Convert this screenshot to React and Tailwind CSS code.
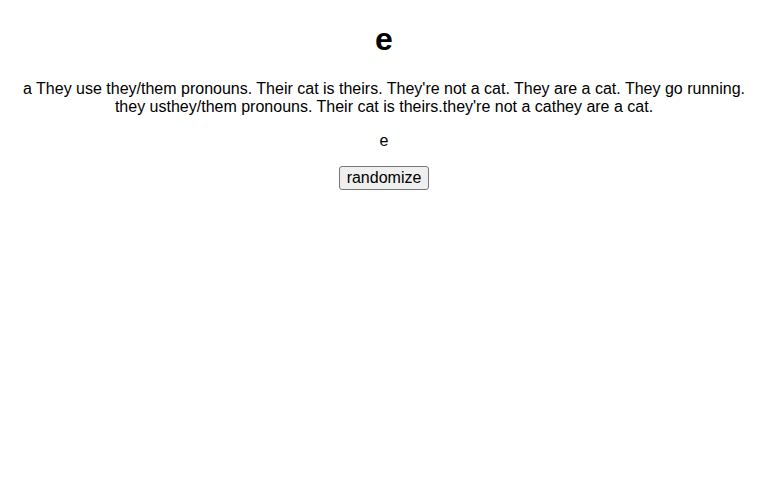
import React from 'react';

export default function App() {
  return (
    <div className="min-h-screen bg-white text-center text-black text-base font-['Liberation_Sans',Arial,sans-serif]">
      <div className="h-[21.44px]" />
      <h1 className="text-[32px] font-bold leading-[36.8px]">e</h1>
      <p className="mt-[21.44px] leading-[18.4px]">
        a They use they/them pronouns. Their cat is theirs. They're not a cat. They are a cat. They go running.
        <br />
        they usthey/them pronouns. Their cat is theirs.they're not a cathey are a cat.
      </p>
      <p className="mt-4 leading-[18.4px]">e</p>
      <div className="mt-[15px]">
        <button className="px-[7px] py-[2px] leading-[18px] text-base bg-[#efefef] border border-[#767676] rounded-[3px] text-black">
          randomize
        </button>
      </div>
    </div>
  );
}
